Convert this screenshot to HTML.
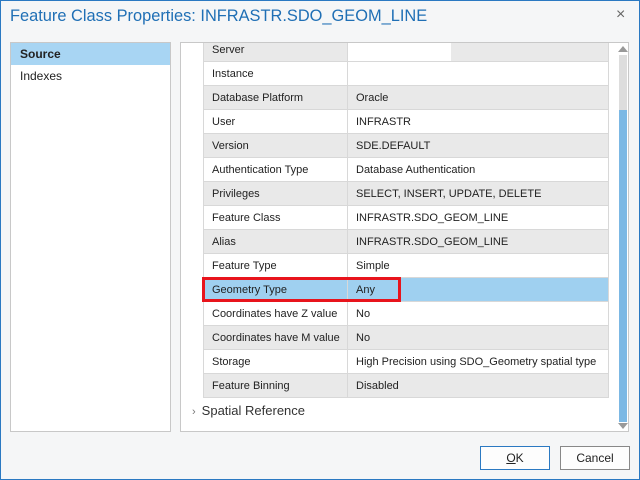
<!DOCTYPE html>
<html><head><style>
body{margin:0;width:640px;height:480px;overflow:hidden;background:#f5f6f7;font-family:"Liberation Sans",sans-serif;position:relative}
.win{position:absolute;left:0;top:0;width:638px;height:478px;border:1px solid #2b79c2;background:#f5f6f7}
.title{position:absolute;left:10px;top:7px;font-size:16.4px;color:#1f6fb5}
.lp{position:absolute;left:10px;top:42px;width:159px;height:388px;border:1px solid #c8c8c8;background:#fff}
.lp div{height:22px;line-height:22px;padding-left:9px;font-size:12px;color:#222}
.rp{position:absolute;left:180px;top:42px;width:447px;height:388px;border:1px solid #c8c8c8;background:#fff;overflow:hidden}
table{position:absolute;left:22px;top:-6px;border-collapse:collapse;width:406px;font-size:11px;color:#222}
td{height:23px;border:1px solid #d8d8d8;padding:0 0 0 8px;white-space:nowrap}
td:first-child{width:135px}
tr.g td{background:#e9e9e9}
tr.s td{background:#9fd0f0}
.red{position:absolute;left:202px;top:277px;width:193px;height:19px;border:3px solid #e8141c}
.sb{position:absolute;left:619px;top:55px;width:8px;height:367px;background:#ddd}
.th{position:absolute;left:619px;top:110px;width:8px;height:312px;background:#7cb8e4}
.btn{position:absolute;top:446px;height:22px;line-height:22px;text-align:center;font-size:12px;color:#222;background:#fdfdfd}
</style></head><body>
<div class="win"></div>
<div class="title">Feature Class Properties: INFRASTR.SDO_GEOM_LINE</div>
<div style="position:absolute;left:616px;top:6px;font-size:16px;color:#666">×</div>
<div class="lp"><div style="background:#a8d5f3;font-weight:bold">Source</div><div>Indexes</div></div>
<div class="rp">
<table>
<tr class="g"><td>Server</td><td style="background:#e9e9e9"></td></tr>
<tr><td>Instance</td><td></td></tr>
<tr class="g"><td>Database Platform</td><td>Oracle</td></tr>
<tr><td>User</td><td>INFRASTR</td></tr>
<tr class="g"><td>Version</td><td>SDE.DEFAULT</td></tr>
<tr><td>Authentication Type</td><td>Database Authentication</td></tr>
<tr class="g"><td>Privileges</td><td>SELECT, INSERT, UPDATE, DELETE</td></tr>
<tr><td>Feature Class</td><td>INFRASTR.SDO_GEOM_LINE</td></tr>
<tr class="g"><td>Alias</td><td>INFRASTR.SDO_GEOM_LINE</td></tr>
<tr><td>Feature Type</td><td>Simple</td></tr>
<tr class="s"><td>Geometry Type</td><td>Any</td></tr>
<tr><td>Coordinates have Z value</td><td>No</td></tr>
<tr class="g"><td>Coordinates have M value</td><td>No</td></tr>
<tr><td>Storage</td><td>High Precision using SDO_Geometry spatial type</td></tr>
<tr class="g"><td>Feature Binning</td><td>Disabled</td></tr>
</table>
<div style="position:absolute;left:167px;top:0;width:103px;height:18px;background:#fff"></div>
<div style="position:absolute;left:11px;top:360px;font-size:13px;color:#333"><span style="color:#777;font-size:11px;margin-right:6px">&#x203A;</span>Spatial Reference</div>
</div>
<div class="sb"></div><div class="th"></div>
<div style="position:absolute;left:618px;top:46px;width:0;height:0;border-left:5px solid transparent;border-right:5px solid transparent;border-bottom:6px solid #999"></div>
<div style="position:absolute;left:618px;top:423px;width:0;height:0;border-left:5px solid transparent;border-right:5px solid transparent;border-top:6px solid #999"></div>
<div class="red"></div>
<div class="btn" style="left:480px;width:68px;border:1px solid #2b79c2"><u>O</u>K</div>
<div class="btn" style="left:560px;width:68px;border:1px solid #888">Cancel</div>
</body></html>
